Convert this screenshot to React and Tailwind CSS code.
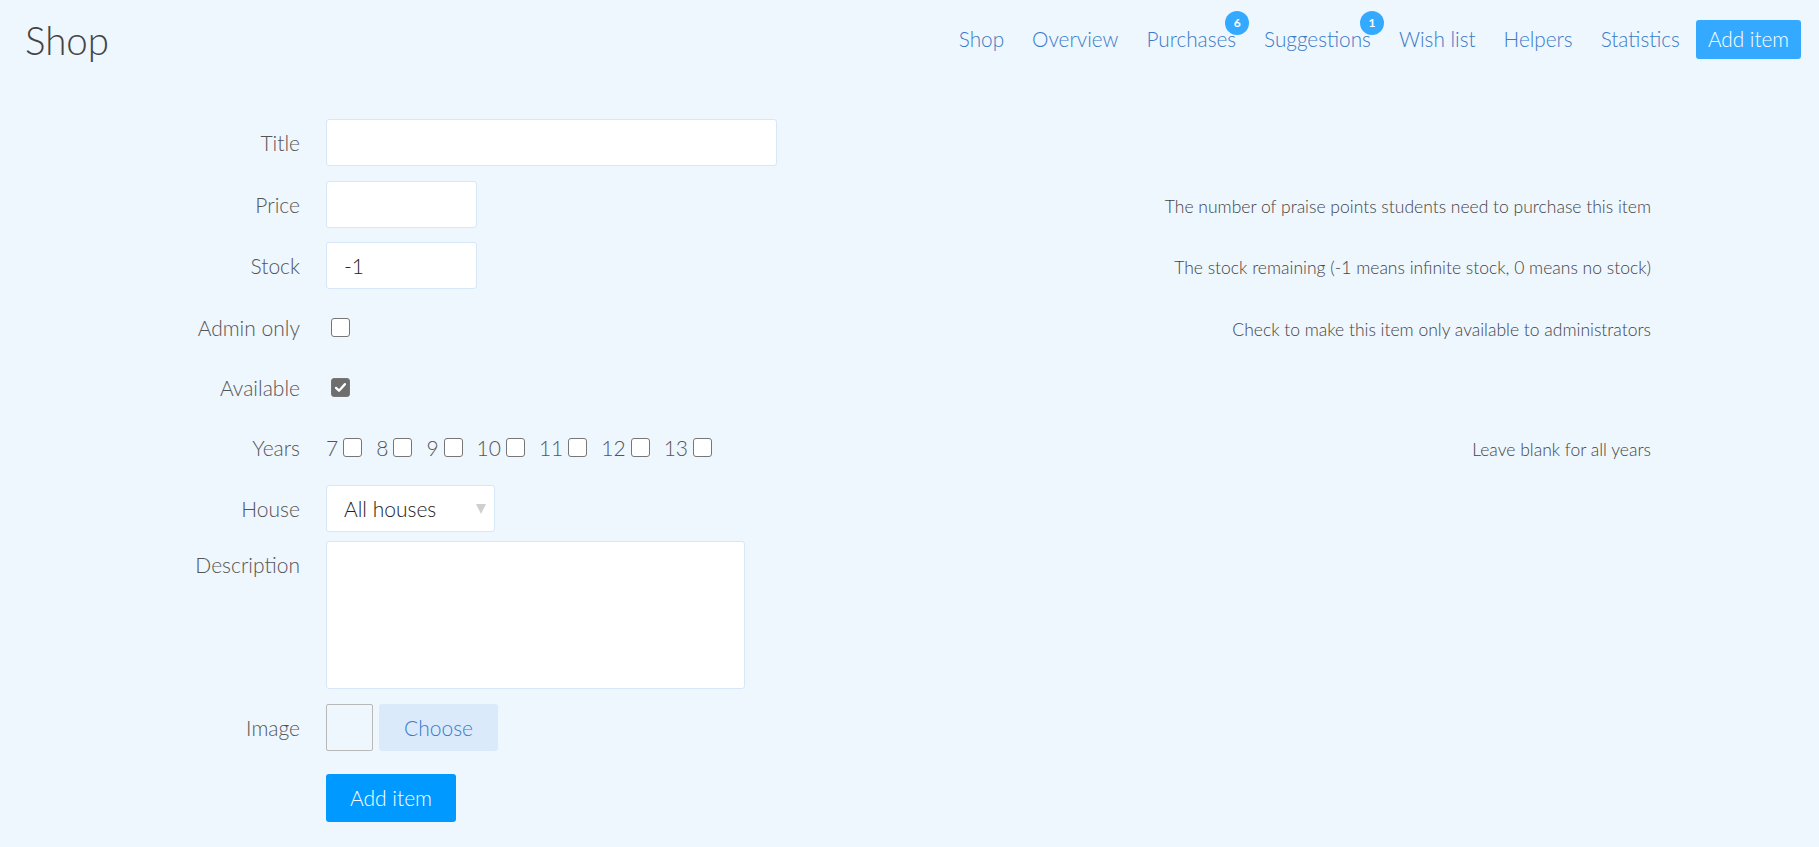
import React from "react";

const navLinks = [
  { label: "Shop" },
  { label: "Overview" },
  { label: "Purchases", badge: 6 },
  { label: "Suggestions", badge: 1 },
  { label: "Wish list" },
  { label: "Helpers" },
  { label: "Statistics" },
];

function Box({ checked = false, className = "" }) {
  return (
    <span
      className={
        "inline-flex h-[19px] w-[19px] shrink-0 items-center justify-center rounded-[3px] border-[1.5px] border-[#767676] " +
        (checked ? "bg-[#6e6e6e] " : "bg-white ") +
        className
      }
    >
      {checked && (
        <svg viewBox="0 0 16 16" className="h-[15px] w-[15px]" fill="none">
          <path d="M3.2 8.4 6.4 11.4 12.8 4.4" stroke="#fff" strokeWidth="2.4" strokeLinecap="round" strokeLinejoin="round" />
        </svg>
      )}
    </span>
  );
}

function Row({ label, help, children, className = "", top = false }) {
  return (
    <div className={"flex " + (top ? "items-start " : "items-center ") + className}>
      <div className="flex h-[47px] w-[300px] shrink-0 items-center justify-end text-[21px] font-light text-[#555]">
        {label}
      </div>
      <div className="ml-[26px] flex min-h-[47px] items-center">{children}</div>
      <div className="flex-1 pt-[5px] text-right text-[17.5px] font-light text-[#444]">{help}</div>
    </div>
  );
}

export default function App() {
  return (
    <div className="min-h-[847px] bg-[#eef6fe] font-['Lato',sans-serif]">
      <header className="flex h-[79px] items-center justify-between pl-[25px] pr-[18px]">
        <h1 className="text-[38.5px] font-light leading-[48px] text-[#444]">Shop</h1>
        <nav className="flex items-center">
          {navLinks.map((l) => (
            <a key={l.label} href="#" className="relative px-[14px] text-[20.75px] font-light text-[#3a7bc8]">
              {l.label}
              {l.badge && (
                <span className="absolute right-[1px] top-[-13px] flex h-[24px] w-[24px] items-center justify-center rounded-full bg-[#33aaff] text-[12px] font-bold text-white">
                  {l.badge}
                </span>
              )}
            </a>
          ))}
          <button className="ml-[2px] h-[39px] rounded-[3px] bg-[#33aaff] px-[12px] text-[20.75px] font-light text-white">
            Add item
          </button>
        </nav>
      </header>

      <form className="mt-[40px] flex flex-col pr-[168px]">
        <Row label="Title">
          <input className="h-[47px] w-[451px] rounded-[3px] border border-[#d8e7f8] bg-white px-[17px] text-[21px] font-light text-[#333] outline-none" />
        </Row>
        <Row label="Price" help="The number of praise points students need to purchase this item" className="mt-[15px]">
          <input className="h-[47px] w-[151px] rounded-[3px] border border-[#d8e7f8] bg-white px-[17px] text-[21px] font-light text-[#333] outline-none" />
        </Row>
        <Row label="Stock" help="The stock remaining (-1 means infinite stock, 0 means no stock)" className="mt-[14px]">
          <input
            defaultValue="-1"
            className="h-[47px] w-[151px] rounded-[3px] border border-[#d8e7f8] bg-white px-[17px] text-[21px] font-light text-[#222] outline-none"
          />
        </Row>
        <Row label="Admin only" help="Check to make this item only available to administrators" className="mt-[15px]">
          <Box className="ml-[5px]" />
        </Row>
        <Row label="Available" className="mt-[13px]">
          <Box checked className="ml-[5px]" />
        </Row>
        <Row label="Years" help="Leave blank for all years" className="mt-[13px]">
          <div className="flex items-center gap-[10px] text-[21px] font-light text-[#555]">
            {[7, 8, 9, 10, 11, 12, 13].map((y) => (
              <label key={y} className="flex items-center">
                <span>{y}</span>
                <Box className="ml-[5px] mr-[4px]" />
              </label>
            ))}
          </div>
        </Row>
        <Row label="House" className="mt-[14px]">
          <div className="relative flex h-[47px] w-[169px] items-center rounded-[3px] border border-[#d8e7f8] bg-white pl-[17px] text-[21px] font-light text-[#222]">
            All houses
            <svg viewBox="0 0 10 10" className="absolute right-[8px] top-[18px] h-[10px] w-[10px]">
              <path d="M0 0h10L5 10z" fill="#cfcfcf" />
            </svg>
          </div>
        </Row>
        <Row label="Description" top className="mt-[9px]">
          <textarea className="h-[148px] w-[419px] resize-none rounded-[3px] border border-[#d8e7f8] bg-white outline-none" />
        </Row>
        <Row label="Image" className="mt-[15px]">
          <div className="flex items-center gap-[6px]">
            <div className="h-[47px] w-[47px] rounded-[2px] border border-[#b9b9b9]" />
            <button type="button" className="h-[47px] w-[119px] rounded-[3px] bg-[#dbeafb] text-[21px] font-light text-[#3a7bc8]">
              Choose
            </button>
          </div>
        </Row>
        <div className="mt-[23px] flex">
          <div className="w-[326px]" />
          <button type="button" className="h-[48px] w-[130px] rounded-[3px] bg-[#0099ff] text-[21px] font-light text-white">
            Add item
          </button>
        </div>
      </form>
    </div>
  );
}
